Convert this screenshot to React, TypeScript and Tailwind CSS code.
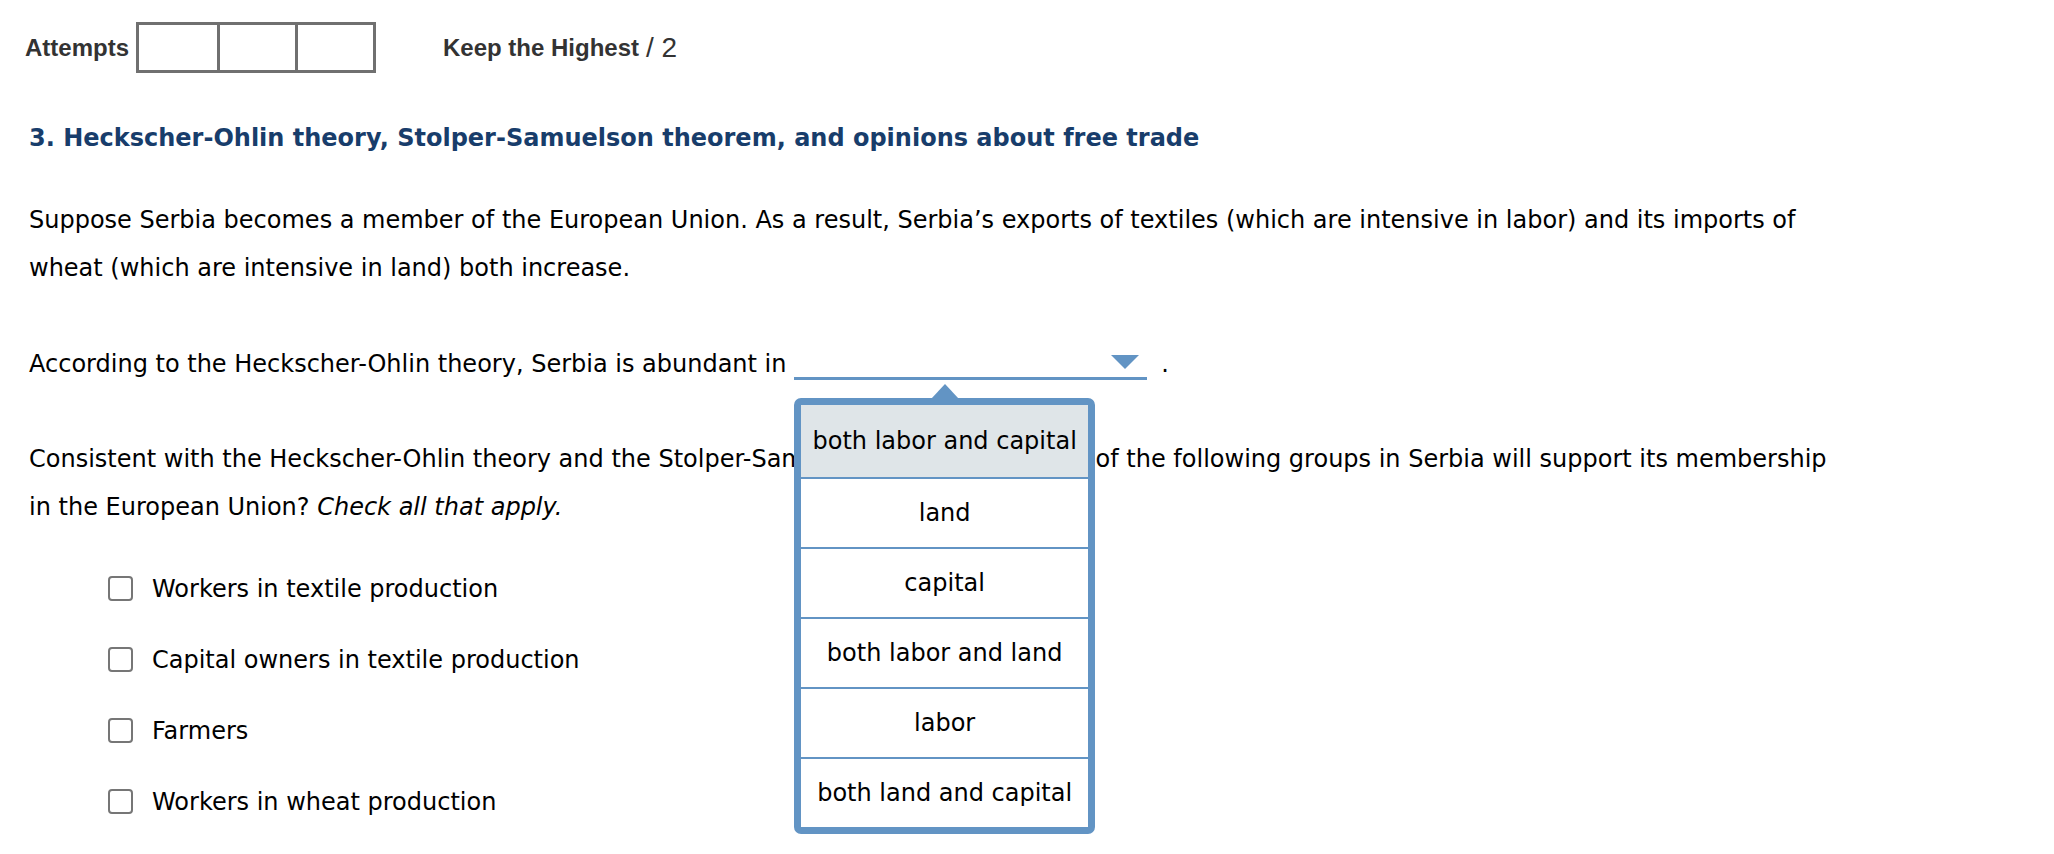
import React from 'react';

const OPTIONS = [
  'both labor and capital',
  'land',
  'capital',
  'both labor and land',
  'labor',
  'both land and capital',
];

const GROUPS = [
  'Workers in textile production',
  'Capital owners in textile production',
  'Farmers',
  'Workers in wheat production',
];

export default function App() {
  return (
    <div className="min-h-[854px] w-full bg-white text-black font-['DejaVu_Sans',Verdana,sans-serif] text-[24px]">
      {/* Attempts header */}
      <div className="flex items-center pl-[25px] pt-[22px] font-['Liberation_Sans',Arial,sans-serif] text-[24px] text-[#333]">
        <span className="font-bold">Attempts</span>
        <div className="ml-[7px] flex h-[51px] border-[3px] border-[#707070]">
          <div className="w-[78px]" />
          <div className="w-[78px] border-l-[3px] border-[#707070]" />
          <div className="w-[78px] border-l-[3px] border-[#707070]" />
        </div>
        <span className="ml-[67px] font-bold">Keep the Highest</span>
        <span className="ml-[7px] text-[28px] leading-none">/ 2</span>
      </div>

      <div className="pl-[29px]">
        <h2 className="mt-[51px] text-[24px] leading-[28px] font-bold text-[#183d6b]">
          3. Heckscher-Ohlin theory, Stolper-Samuelson theorem, and opinions about free trade
        </h2>

        <p className="mt-[44px] max-w-[1801px] leading-[48px]">
          Suppose Serbia becomes a member of the European Union. As a result, Serbia’s exports of textiles (which are
          intensive in labor) and its imports of wheat (which are intensive in land) both increase.
        </p>

        <p className="mt-[48px] leading-[48px]">
          According to the Heckscher-Ohlin theory, Serbia is abundant in{' '}
          <Select />
          <span className="ml-[14px]">.</span>
        </p>

        <p className="mt-[47px] max-w-[1801px] leading-[48px]">
          Consistent with the Heckscher-Ohlin theory and the Stolper-Samuelson{' '}
          <span className="tracking-[0.7px]">theorem, which</span> of the following groups in Serbia will support its
          membership in the European Union? <em>Check all that apply.</em>
        </p>

        <div className="mt-[22px]">
          {GROUPS.map((g) => (
            <label key={g} className="flex h-[71px] items-center leading-[30px]">
              <span className="ml-[79px] h-[25px] w-[25px] shrink-0 rounded-[4px] border-2 border-[#767676] bg-white" />
              <span className="ml-[19px]">{g}</span>
            </label>
          ))}
        </div>
      </div>
    </div>
  );
}

function Select() {
  return (
    <span className="relative inline-block h-[34px] w-[353px] border-b-[3px] border-[#6294c4] align-[-8px]">
      <svg className="absolute right-[8px] bottom-[8px]" width="28" height="14" viewBox="0 0 28 14">
        <path d="M0 0 H28 L14 14 Z" fill="#6294c4" />
      </svg>

      {/* Open listbox */}
      <div className="absolute left-0 top-[calc(100%+21px)] z-10 w-[301px]">
        <svg className="absolute left-1/2 top-[-14px] -translate-x-1/2" width="28" height="15" viewBox="0 0 28 15">
          <path d="M0 15 L14 0 L28 15 Z" fill="#6294c4" />
        </svg>
        <ul className="overflow-hidden rounded-[7px] border-[7px] border-[#6294c4] bg-white">
          {OPTIONS.map((o, i) => (
            <li
              key={o}
              className={`flex items-center justify-center leading-[30px] ${
                i === 0 ? 'h-[72px] bg-[#dfe5e8]' : 'h-[70px] border-t-2 border-[#6294c4]'
              }`}
            >
              {o}
            </li>
          ))}
        </ul>
      </div>
    </span>
  );
}
